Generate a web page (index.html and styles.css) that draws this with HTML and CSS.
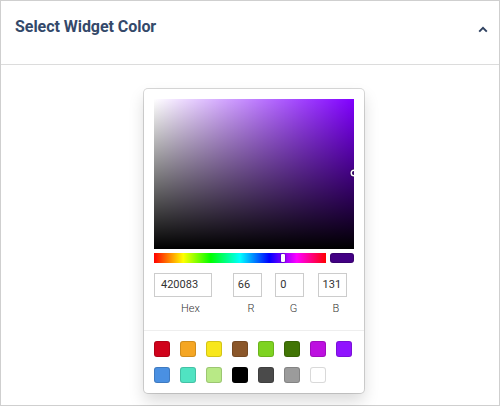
FILE: index.html
```html
<!DOCTYPE html>
<html>
<head>
<meta charset="utf-8">
<link rel="stylesheet" href="styles.css">
</head>
<body>
<div class="panel">
  <div class="header">
    <span class="title">Select Widget Color</span>
    <svg class="chev" width="10" height="7" viewBox="0 0 10 7"><path d="M1.2 5.6 L5 1.9 L8.8 5.6" fill="none" stroke="#2f4160" stroke-width="2"/></svg>
  </div>
  <div class="body">
    <div class="picker">
      <div class="sat">
        <div class="sat-white"></div>
        <div class="sat-black"></div>
        <div class="sat-thumb" style="left:100%;top:49%"></div>
      </div>
      <div class="controls">
        <div class="hue"><div class="hue-thumb" style="left:75%"></div></div>
        <div class="preview"></div>
      </div>
      <div class="fields">
        <div class="field double"><div class="input">420083</div><span class="label">Hex</span></div>
        <div class="field"><div class="input">66</div><span class="label">R</span></div>
        <div class="field"><div class="input">0</div><span class="label">G</span></div>
        <div class="field"><div class="input">131</div><span class="label">B</span></div>
      </div>
      <div class="swatches">
        <span class="sw" style="background:#D0021B"></span>
        <span class="sw" style="background:#F5A623"></span>
        <span class="sw" style="background:#F8E71C"></span>
        <span class="sw" style="background:#8B572A"></span>
        <span class="sw" style="background:#7ED321"></span>
        <span class="sw" style="background:#417505"></span>
        <span class="sw" style="background:#BD10E0"></span>
        <span class="sw" style="background:#9013FE"></span>
        <span class="sw" style="background:#4A90E2"></span>
        <span class="sw" style="background:#50E3C2"></span>
        <span class="sw" style="background:#B8E986"></span>
        <span class="sw" style="background:#000000"></span>
        <span class="sw" style="background:#4A4A4A"></span>
        <span class="sw" style="background:#9B9B9B"></span>
        <span class="sw" style="background:#FFFFFF"></span>
      </div>
    </div>
  </div>
</div>
</body>
</html>
```
FILE: styles.css
```css
html, body { margin: 0; padding: 0; background: #fff; }
body { font-family: Roboto, "Liberation Sans", sans-serif; }
.panel {
  width: 500px; height: 406px; box-sizing: border-box;
  border: 1px solid #cfcfcf;
}
.header {
  height: 64px; box-sizing: border-box;
  border-bottom: 1px solid #dcdcdc;
  display: flex; align-items: flex-start; justify-content: space-between;
  padding: 16px 11px 0 14px;
}
.title { font-size: 16px; font-weight: 700; color: #34496a; line-height: 20px; letter-spacing: -0.05px; }
.chev { margin-top: 9px; }
.body { padding-top: 24px; }
.picker {
  margin-left: 143px; width: 220px; box-sizing: border-box;
  padding: 10px 10px 0;
  background: #fff; border-radius: 4px;
  box-shadow: rgba(0,0,0,.15) 0 0 0 1px, rgba(0,0,0,.15) 0 8px 16px;
}
.sat { position: relative; height: 150px; background: #8000ff; overflow: hidden; }
.sat-white, .sat-black { position: absolute; inset: 0; }
.sat-white { background: linear-gradient(to right, #fff, rgba(255,255,255,0)); }
.sat-black { background: linear-gradient(to top, #000, rgba(0,0,0,0)); }
.sat-thumb {
  position: absolute; width: 4px; height: 4px; border-radius: 50%;
  box-shadow: 0 0 0 1.5px #fff, inset 0 0 1px 1px rgba(0,0,0,.3), 0 0 1px 2px rgba(0,0,0,.4);
  transform: translate(-2px, -2px);
}
.controls { display: flex; margin-top: 4px; }
.hue {
  flex: 1; position: relative; height: 10px;
  background: linear-gradient(to right, #f00 0%, #ff0 17%, #0f0 33%, #0ff 50%, #00f 67%, #f0f 83%, #f00 100%);
}
.hue-thumb {
  position: absolute; top: 1px; width: 4px; height: 8px; background: #fff;
  border-radius: 1px; box-shadow: 0 0 2px rgba(0,0,0,.6); transform: translateX(-2px);
}
.preview { width: 24px; height: 10px; margin-left: 4px; border-radius: 3px; background: #420083;
  box-shadow: inset 0 0 0 1px rgba(0,0,0,.15); }
.fields { display: flex; padding-top: 10px; }
.field { flex: 1; padding-left: 6px; display: flex; flex-direction: column; }
.field.double { flex: 2; padding-left: 0; }
.input {
  width: 80%; height: 24px; box-sizing: border-box;
  box-shadow: inset 0 0 0 1px #ccc;
  font-size: 11px; color: #333; line-height: 24px; padding-left: 8px;
}
.field .input { padding-left: 5px; }
.field.double .input { padding-left: 7px; }
.label {
  width: 100%; text-align: center; font-size: 11px; font-weight: 300; color: #333;
  padding-top: 5px; line-height: 14px; height: 29px; box-sizing: border-box;
}
.swatches {
  margin: 4px -10px 0; padding: 10px 0 0 10px;
  border-top: 1px solid #eee;
  display: flex; flex-wrap: wrap;
}
.sw {
  width: 16px; height: 16px; margin: 0 10px 10px 0; border-radius: 3px;
  box-shadow: inset 0 0 0 1px rgba(0,0,0,.15);
}
```
